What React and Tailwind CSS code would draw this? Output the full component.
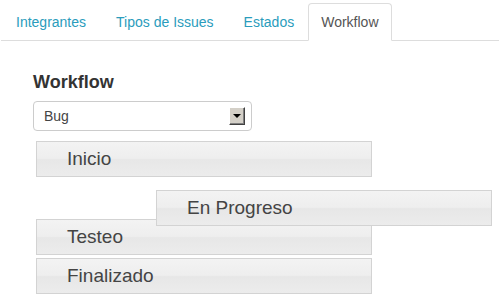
import React from "react";

const tabs = ["Integrantes", "Tipos de Issues", "Estados", "Workflow"];

function Box({ label, className = "" }) {
  return (
    <div
      className={
        "w-[336px] h-[36px] border border-[#d3d3d3] flex items-center pl-[30px] pt-[1px] text-[19px] text-[#444] bg-[linear-gradient(to_bottom,#f3f3f3_0%,#eeeeee_48%,#e7e7e7_52%,#ececec_100%)] " +
        className
      }
    >
      {label}
    </div>
  );
}

export default function App() {
  return (
    <div className="w-[499px] h-[298px] bg-white overflow-hidden font-['Liberation_Sans',Arial,sans-serif]">
      <ul className="flex items-end ml-[1px] pt-[3px] border-b border-[#dddddd]">
        {tabs.map((t) => {
          const active = t === "Workflow";
          return (
            <li
              key={t}
              className={
                "h-[38px] -mb-px flex items-center text-[14px] border rounded-t-[4px] " +
                (active
                  ? "px-[12px] -ml-[1px] border-[#dddddd] border-b-white bg-white text-[#555555]"
                  : "px-[14px] border-transparent text-[#2a9cbc]")
              }
            >
              {t}
            </li>
          );
        })}
      </ul>
      <div className="pl-[33px] pt-[31px]">
        <h2 className="text-[18px] leading-[20px] font-bold text-[#333333]">Workflow</h2>
        <div className="mt-[9px] w-[219px] h-[30px] border border-[#cccccc] rounded-[4px] flex items-center justify-between pl-[10px] pr-[6px] text-[14px] text-[#444]">
          <span>Bug</span>
          <span className="w-[16px] h-[18px] bg-[#d4d0c8] border border-t-white border-l-white border-r-[#404040] border-b-[#404040] shadow-[inset_-1px_-1px_0_#808080] flex items-center justify-center">
            <span className="w-0 h-0 border-l-[4px] border-r-[4px] border-t-[4px] border-l-transparent border-r-transparent border-t-black" />
          </span>
        </div>
        <div className="mt-[10px] ml-[3px] flex flex-col gap-[3px]">
          <Box label="Inicio" />
          <Box label="En Progreso" className="relative left-[120px] top-[10px] z-10" />
          <Box label="Testeo" />
          <Box label="Finalizado" />
        </div>
      </div>
    </div>
  );
}
